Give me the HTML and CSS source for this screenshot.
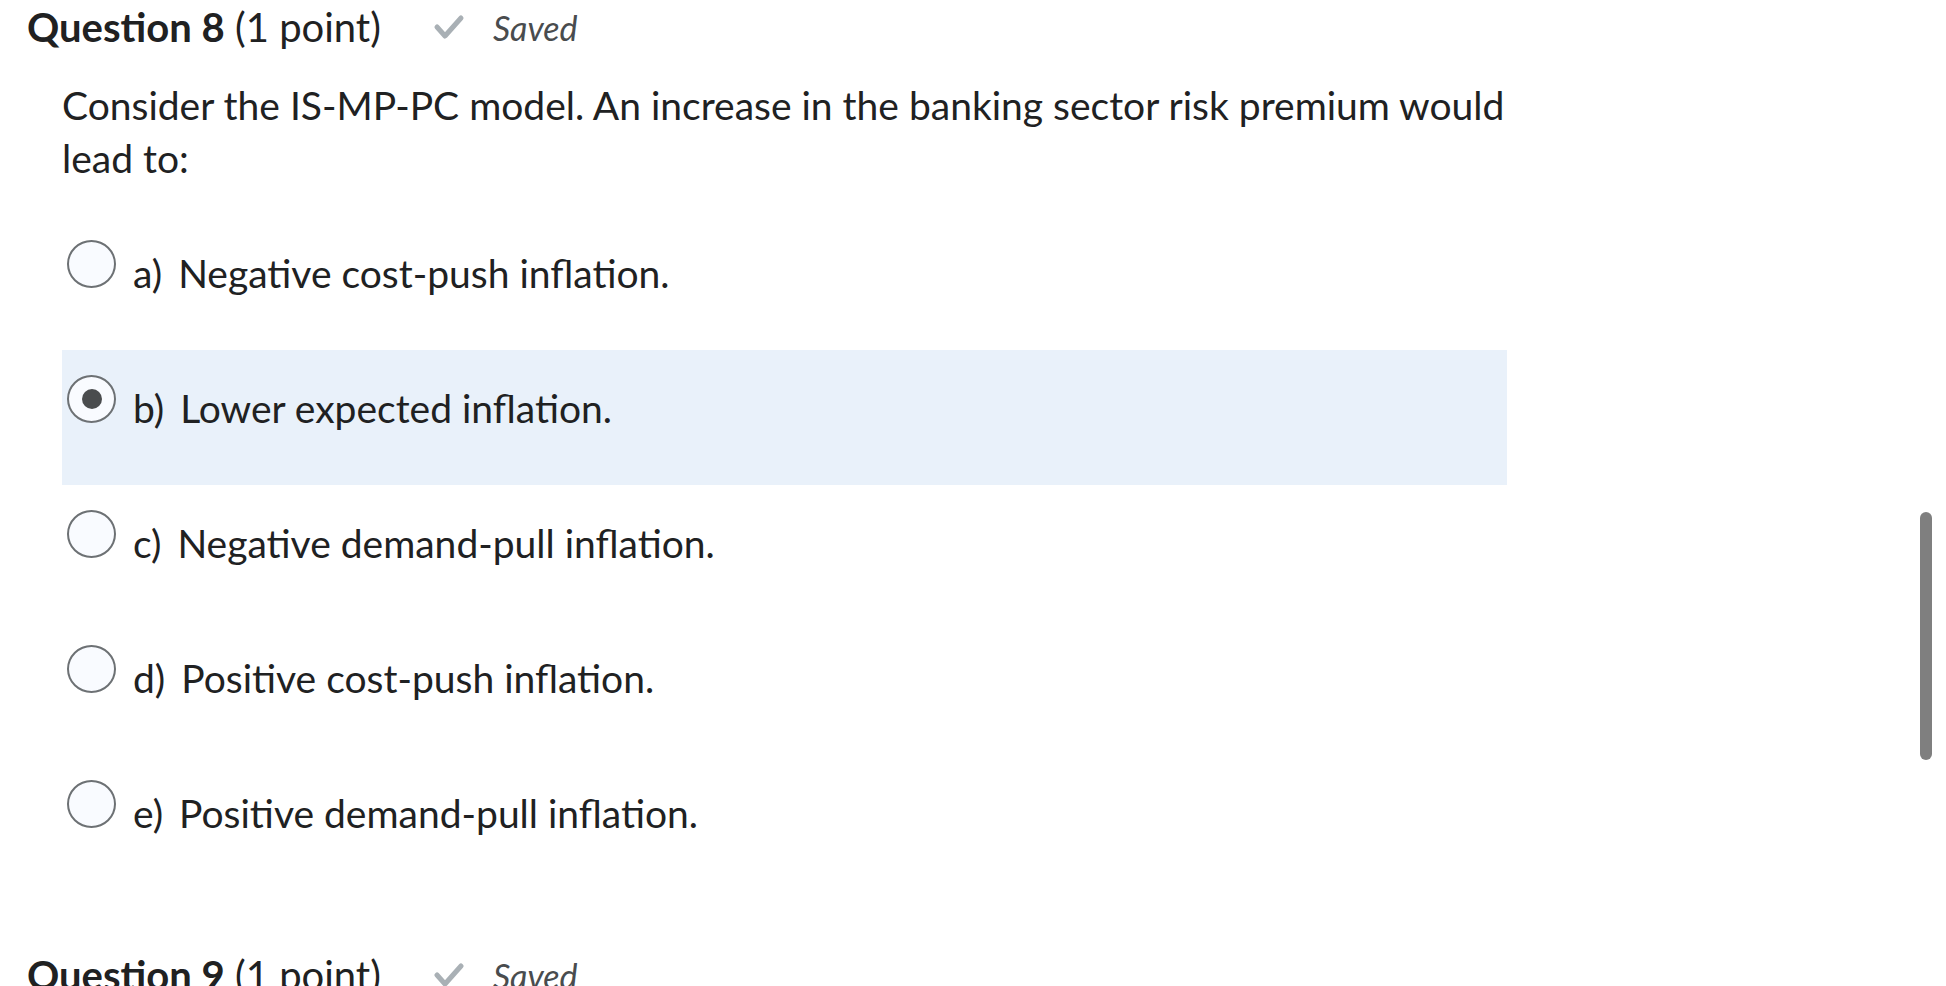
FILE: index.html
```html
<!DOCTYPE html>
<html>
<head>
<meta charset="utf-8">
<link rel="stylesheet" href="styles.css">
</head>
<body>
<div class="page">
  <div class="q-head">
    <h2 class="q-title"><strong>Question 8</strong> (1 point)</h2>
    <span class="saved">
      <svg class="check" viewBox="0 0 32 26" width="32" height="26"><polyline points="4,13 12,22 28,4" fill="none" stroke="#a9b0b5" stroke-width="5" stroke-linecap="round" stroke-linejoin="round"/></svg>
      <em>Saved</em>
    </span>
  </div>
  <div class="q-body">
    <p class="q-text">Consider the IS-MP-PC model. An increase in the banking sector risk premium would lead to:</p>
    <div class="options">
      <div class="opt"><span class="radio"></span><span class="lbl">a)</span><span>Negative cost-push inflation.</span></div>
      <div class="opt selected"><span class="radio checked"></span><span class="lbl">b)</span><span>Lower expected inflation.</span></div>
      <div class="opt"><span class="radio"></span><span class="lbl">c)</span><span>Negative demand-pull inflation.</span></div>
      <div class="opt"><span class="radio"></span><span class="lbl">d)</span><span>Positive cost-push inflation.</span></div>
      <div class="opt"><span class="radio"></span><span class="lbl">e)</span><span>Positive demand-pull inflation.</span></div>
    </div>
  </div>
  <div class="q-head next">
    <h2 class="q-title"><strong>Question 9</strong> (1 point)</h2>
    <span class="saved">
      <svg class="check" viewBox="0 0 32 26" width="32" height="26"><polyline points="4,13 12,22 28,4" fill="none" stroke="#a9b0b5" stroke-width="5" stroke-linecap="round" stroke-linejoin="round"/></svg>
      <em>Saved</em>
    </span>
  </div>
</div>
<div class="scrollbar"></div>
</body>
</html>
```

FILE: styles.css
```css
html, body {
  margin: 0;
  padding: 0;
  background: #ffffff;
  overflow: hidden;
}
body {
  font-family: Lato, "Noto Sans", sans-serif;
  color: #202122;
  width: 1946px;
  height: 986px;
}
.page {
  padding-left: 27px;
  display: flex;
  flex-direction: column;
}
.q-head {
  display: flex;
  align-items: center;
  height: 54px;
}
.q-title {
  margin: 0;
  font-size: 40px;
  font-weight: 400;
  line-height: 54px;
}
.q-title strong {
  font-weight: 700;
}
.saved {
  display: flex;
  align-items: center;
  margin-left: 52px;
  color: #494c4e;
  font-size: 34px;
}
.check {
  margin-right: 28px;
}
.q-body {
  padding-left: 35px;
  padding-top: 25px;
}
.q-text {
  margin: 0;
  width: 1450px;
  font-size: 39px;
  line-height: 53px;
}
.options {
  display: flex;
  flex-direction: column;
  width: 1445px;
  margin-top: 30px;
}
.opt {
  box-sizing: border-box;
  display: flex;
  align-items: center;
  height: 135px;
  padding-left: 5px;
  padding-bottom: 20px;
  font-size: 39px;
}
.opt.selected {
  background: #e9f1fa;
}
.radio {
  box-sizing: border-box;
  width: 49px;
  height: 48px;
  border: 2px solid #6d7174;
  border-radius: 50%;
  background: #f9fbff;
  margin-right: 17px;
  margin-top: -18px;
  display: flex;
  align-items: center;
  justify-content: center;
  flex: none;
}
.radio.checked::after {
  content: "";
  width: 20px;
  height: 20px;
  border-radius: 50%;
  background: #4a4c4e;
}
.lbl {
  margin-right: 16px;
}
.q-head.next {
  margin-top: 58px;
}
.scrollbar {
  position: fixed;
  left: 1920px;
  top: 512px;
  width: 12px;
  height: 248px;
  border-radius: 6px;
  background: #7f7f7f;
}
```
